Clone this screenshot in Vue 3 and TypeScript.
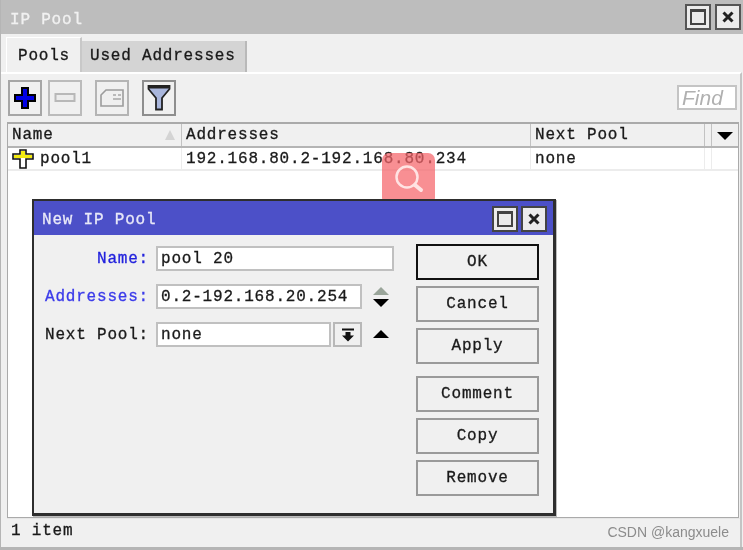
<script setup lang="ts">
const dialogButtons = [
  { label: 'OK', primary: true },
  { label: 'Cancel' },
  { label: 'Apply', spaced: true },
  { label: 'Comment' },
  { label: 'Copy' },
  { label: 'Remove' },
]
</script>

<template>
  <div class="window">
    <header class="titlebar">
      <span class="title">IP Pool</span>
      <div class="winbtns">
        <button class="winbtn"><span class="maxglyph"></span></button>
        <button class="winbtn">
          <svg width="14" height="14" viewBox="0 0 14 14"><path d="M2.5 2.5 11.5 11.5M11.5 2.5 2.5 11.5" stroke="#222" stroke-width="3" fill="none"/></svg>
        </button>
      </div>
    </header>

    <nav class="tabs">
      <div class="tab active">Pools</div>
      <div class="tab">Used Addresses</div>
    </nav>

    <section class="pane">
      <div class="toolbar">
        <button class="tool plus">
          <svg width="24" height="24" viewBox="0 0 24 24"><path d="M9 2h6v7h7v6h-7v7H9v-7H2V9h7z" fill="#0000e6" stroke="#000" stroke-width="2"/></svg>
        </button>
        <button class="tool minus">
          <svg width="24" height="12" viewBox="0 0 24 12"><rect x="2.5" y="2" width="19" height="7" fill="#ececec" stroke="#b8b8b8" stroke-width="2"/></svg>
        </button>
        <button class="tool note">
          <svg width="26" height="22" viewBox="0 0 26 22"><path d="M7 3h17v16H2V8z" fill="#efefef" stroke="#9c9c9c" stroke-width="1.6"/><path d="M14 8h3M19 8h3M14 12h8" stroke="#a8a8a8" stroke-width="1.4" fill="none"/></svg>
        </button>
        <button class="tool filter">
          <svg width="24" height="28" viewBox="0 0 24 28"><path d="M1.5 2h21v3l-7.5 9v11.5h-6V14L1.500 5z" fill="#a9b6dc" stroke="#222" stroke-width="1.8"/><path d="M2 3.500h20" stroke="#222" stroke-width="2"/></svg>
        </button>
        <div class="find">Find</div>
      </div>

      <div class="table">
        <div class="thead">
          <div class="cell c-name">Name<span class="sort"></span></div>
          <div class="cell c-addr">Addresses</div>
          <div class="cell c-next">Next Pool</div>
          <div class="cell c-gap"></div>
          <div class="cell c-menu"><span class="caret"></span></div>
        </div>
        <div class="trow">
          <div class="cell c-name"><svg class="poolicon" width="22" height="20" viewBox="0 0 22 20"><path d="M8 1h6v4h7v5h-7v9H8v-9H1V5h7z" fill="#fff" stroke="#111" stroke-width="1.6"/><rect x="2" y="6" width="18" height="3" fill="#f2ea10"/><rect x="9" y="2" width="4" height="4" fill="#f2ea10"/></svg><span>pool1</span></div>
          <div class="cell c-addr">192.168.80.2-192.168.80.234</div>
          <div class="cell c-next">none</div>
          <div class="cell c-gap"></div>
          <div class="cell c-menu"></div>
        </div>
        <div class="tfill"></div>
      </div>

      <footer class="status">1 item</footer>
    </section>

    <div class="search-badge">
      <svg width="34" height="34" viewBox="0 0 34 34"><circle cx="15" cy="15" r="10.500" fill="none" stroke="#ffe3e3" stroke-width="2.500"/><path d="M23 23l6 5" stroke="#ffe3e3" stroke-width="4" stroke-linecap="round"/></svg>
    </div>

    <div class="dialog">
      <header class="dlg-title">
        <span>New IP Pool</span>
        <div class="winbtns dlg-btns">
          <button class="winbtn"><span class="maxglyph"></span></button>
          <button class="winbtn">
            <svg width="14" height="14" viewBox="0 0 14 14"><path d="M2.5 2.5 11.5 11.5M11.5 2.5 2.5 11.5" stroke="#222" stroke-width="3" fill="none"/></svg>
          </button>
        </div>
      </header>
      <div class="dlg-body">
        <div class="form">
          <div class="frow">
            <label class="blue">Name:</label>
            <div class="input wide">pool 20</div>
          </div>
          <div class="frow">
            <label class="indigo">Addresses:</label>
            <div class="input mid">0.2-192.168.20.254</div>
            <div class="updown">
              <span class="tri up grey"></span>
              <span class="tri down"></span>
            </div>
          </div>
          <div class="frow">
            <label>Next Pool:</label>
            <div class="input short">none</div>
            <button class="drop">
              <svg width="14" height="14" viewBox="0 0 14 14"><path d="M1 1.500h12" stroke="#111" stroke-width="2"/><path d="M4.500 4h5v3.500h3.500l-6 6-6-6h3.500z" fill="#111"/></svg>
            </button>
            <div class="updown single"><span class="tri up"></span></div>
          </div>
        </div>
        <div class="actions">
          <button
            v-for="b in dialogButtons"
            :key="b.label"
            class="act"
            :class="{ primary: b.primary, spaced: b.spaced }"
          >{{ b.label }}</button>
        </div>
      </div>
    </div>

    <div class="watermark">CSDN @kangxuele</div>
  </div>
</template>

<style scoped>
.window {
  position: relative;
  width: 743px;
  height: 550px;
  box-sizing: border-box;
  display: flex;
  flex-direction: column;
  overflow: hidden;
  background: #f0f0f0;
  font-family: "Liberation Mono", monospace;
  font-size: 16px;
  letter-spacing: 0.8px;
  -webkit-text-stroke: 0.3px currentColor;
  color: #1a1a1a;
  border-left: 1px solid #b5b5b5;
  border-bottom: 3px solid #b5b5b5;
  filter: blur(0.45px);
}
button {
  font: inherit;
  letter-spacing: inherit;
  color: inherit;
  padding: 0;
  margin: 0;
  cursor: default;
}
.titlebar {
  flex: none;
  height: 34px;
  background: #bdbdbd;
  display: flex;
  align-items: center;
  justify-content: space-between;
  padding: 0 2px 0 9px;
  color: #f1f1f1;
}
.title {
  position: relative;
  top: 3px;
}
.winbtns {
  display: flex;
  gap: 4px;
}
.winbtn {
  width: 26px;
  height: 26px;
  box-sizing: border-box;
  background: #ececec;
  border: 2px solid #555;
  display: flex;
  align-items: center;
  justify-content: center;
}
.maxglyph {
  display: block;
  width: 16px;
  height: 16px;
  box-sizing: border-box;
  border: 2px solid #444;
  border-top-width: 3px;
}
.tabs {
  flex: none;
  height: 38px;
  display: flex;
  align-items: flex-end;
  padding-left: 5px;
}
.tab {
  height: 31px;
  box-sizing: border-box;
  padding: 6px 9px 0 8px;
  background: #d4d4d4;
  border-right: 2px solid #b9b9b9;
}
.tab.active {
  height: 35px;
  width: 76px;
  padding: 9px 0 0 11px;
  background: #f0f0f0;
  border-top: 1px solid #fff;
  border-left: 1px solid #fff;
  border-right: 2px solid #c8c8c8;
}
.pane {
  flex: 1;
  min-height: 0;
  display: flex;
  flex-direction: column;
  border-top: 2px solid #fff;
  border-right: 2px solid #c4c4c4;
  margin-right: 1px;
  padding-left: 6px;
}
.toolbar {
  flex: none;
  height: 48px;
  display: flex;
  align-items: flex-start;
  padding: 6px 3px 0 1px;
  box-sizing: border-box;
}
.tool {
  width: 34px;
  height: 36px;
  box-sizing: border-box;
  background: #f0f0f0;
  border: 2px solid #b0b0b0;
  display: flex;
  align-items: center;
  justify-content: center;
  margin-right: 6px;
}
.tool.plus { border-color: #a6a6a6; }
.tool.minus { margin-right: 13px; border-color: #bbb; }
.tool.note { margin-right: 13px; border-color: #b4b4b4; }
.tool.filter { border-color: #8e8e8e; }
.find {
  margin-left: auto;
  margin-top: 5px;
  width: 60px;
  height: 25px;
  box-sizing: border-box;
  background: #fff;
  border: 2px solid #c4c4c4;
  color: #b0b0b0;
  font-family: "Liberation Sans", sans-serif;
  font-style: italic;
  font-size: 21px;
  letter-spacing: 0;
  -webkit-text-stroke: 0;
  line-height: 21px;
  padding-left: 3px;
}
.table {
  flex: 1;
  min-height: 0;
  display: flex;
  flex-direction: column;
  background: #fff;
  border: 1px solid #aaa;
  border-top: 2px solid #aaa;
  margin-right: 1px;
}
.thead,
.trow {
  flex: none;
  display: flex;
}
.thead {
  height: 24px;
  background: #f0f0f0;
  border-bottom: 2px solid #b4b4b4;
  box-sizing: border-box;
}
.trow {
  height: 23px;
  border-bottom: 2px solid #ececec;
  box-sizing: border-box;
}
.cell {
  box-sizing: border-box;
  display: flex;
  align-items: center;
  padding-left: 4px;
  white-space: pre;
  border-right: 1px solid #c2c2c2;
}
.trow .cell { border-right-color: #ececec; }
.c-name { width: 174px; position: relative; }
.c-addr { width: 349px; }
.c-next { width: 174px; }
.c-gap { width: 7px; padding: 0; }
.c-menu {
  flex: 1;
  justify-content: center;
  padding: 0;
  border-right: none;
}
.sort {
  position: absolute;
  right: 6px;
  top: 6px;
  border-left: 5px solid transparent;
  border-right: 5px solid transparent;
  border-bottom: 10px solid #d4d4d4;
}
.caret {
  border-left: 8px solid transparent;
  border-right: 8px solid transparent;
  border-top: 8px solid #000;
  margin-top: 2px;
}
.poolicon {
  margin-right: 6px;
  flex: none;
}
.tfill { flex: 1; }
.status {
  flex: none;
  height: 29px;
  box-sizing: border-box;
  padding: 3px 0 0 4px;
  border-top: 1px solid #e6e6e6;
}
.search-badge {
  position: absolute;
  left: 381px;
  top: 153px;
  width: 53px;
  height: 52px;
  border-radius: 7px;
  background: rgba(245, 100, 105, 0.72);
  display: flex;
  align-items: center;
  justify-content: center;
}
.dialog {
  position: absolute;
  left: 31px;
  top: 199px;
  width: 524px;
  height: 317px;
  box-sizing: border-box;
  background: #f0f0f0;
  border: 2px solid #2e2e2e;
  border-right-width: 3px;
  border-bottom-width: 3px;
  display: flex;
  flex-direction: column;
  box-shadow: 1px 1px 0 #bdbdbd;
}
.dlg-title {
  flex: none;
  height: 34px;
  background: #4c50c8;
  color: #e8e8f8;
  display: flex;
  align-items: center;
  justify-content: space-between;
  padding: 0 6px 0 8px;
}
.dlg-title > span {
  position: relative;
  top: 2px;
}
.dlg-btns {
  gap: 3px;
  position: relative;
  top: 1px;
}
.dlg-btns .winbtn { border-color: #444; }
.dlg-body {
  flex: 1;
  display: flex;
  padding: 9px 14px 0 0;
}
.form {
  width: 384px;
  display: flex;
  flex-direction: column;
  gap: 13px;
  padding-top: 2px;
}
.frow {
  height: 25px;
  display: flex;
  align-items: center;
}
.frow label {
  width: 115px;
  margin-right: 7px;
  text-align: right;
  flex: none;
}
.blue { color: #2222dd; }
.indigo { color: #3b3bea; }
.input {
  height: 25px;
  box-sizing: border-box;
  background: #fff;
  border: 2px solid #c0c0c0;
  padding-left: 3px;
  line-height: 22px;
  white-space: pre;
  overflow: hidden;
}
.wide { width: 238px; }
.mid { width: 206px; }
.short { width: 175px; }
.drop {
  width: 29px;
  height: 25px;
  box-sizing: border-box;
  margin-left: 2px;
  background: #f0f0f0;
  border: 2px solid #b8b8b8;
  display: flex;
  align-items: center;
  justify-content: center;
}
.updown {
  margin-left: 11px;
  width: 16px;
  display: flex;
  flex-direction: column;
  gap: 4px;
  align-items: center;
}
.updown.single { margin-bottom: 2px; }
.tri {
  display: block;
  border-left: 8px solid transparent;
  border-right: 8px solid transparent;
}
.tri.up { border-bottom: 8px solid #000; }
.tri.up.grey { border-bottom-color: #9aa59a; }
.tri.down { border-top: 8px solid #000; }
.actions {
  display: flex;
  flex-direction: column;
  gap: 6px;
}
.act {
  width: 123px;
  height: 36px;
  box-sizing: border-box;
  background: #f0f0f0;
  border: 2px solid #9a9a9a;
  text-align: center;
  flex: none;
}
.act.primary { border-color: #111; }
.act.spaced { margin-bottom: 6px; }
.watermark {
  position: absolute;
  right: 14px;
  top: 524px;
  font-family: "Liberation Sans", sans-serif;
  font-size: 14px;
  letter-spacing: 0;
  -webkit-text-stroke: 0;
  color: #8c8c8c;
}
</style>
